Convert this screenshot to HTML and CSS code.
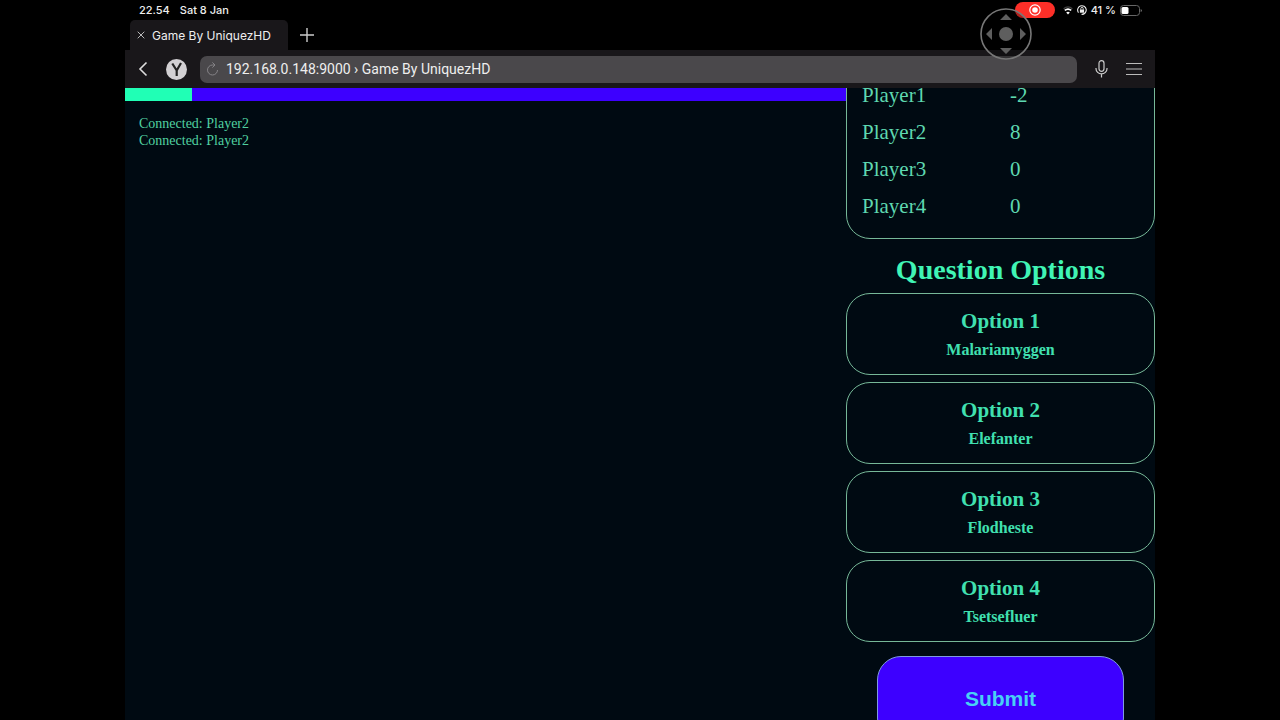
FILE: index.html
```html
<!DOCTYPE html>
<html lang="en">
<head>
<meta charset="utf-8">
<title>Game By UniquezHD</title>
<link rel="stylesheet" href="styles.css">
</head>

<body>
<div id="screen">
	<div id="status">
		<span>22.54</span>
		<span>Sat 8 Jan</span>
		<div class="status-right">
			<span class="rec">
				<svg width="12" height="12" viewBox="0 0 12 12"><circle cx="6" cy="6" r="5.2" fill="none" stroke="#fff" stroke-width="1.2"/><circle cx="6" cy="6" r="2.8" fill="#fff"/></svg>
			</span>
			<svg width="10" height="10" viewBox="0 0 10 10"><path d="M.6 3.8Q5 0 9.4 3.8" fill="none" stroke="#444" stroke-width="1.3"/><path d="M1.8 5.4Q5 2.8 8.2 5.4" fill="none" stroke="#fff" stroke-width="1.7"/><path d="M5 9.6L3.2 7.5Q5 6.1 6.8 7.5z" fill="#fff"/></svg>
			<svg width="10" height="10" viewBox="0 0 10 10"><path d="M1.5 7.6A4.3 4.3 0 1 1 4.5 9.3" fill="none" stroke="#eee" stroke-width="1.1"/><rect x="2.9" y="4.5" width="4.2" height="3.2" fill="#eee"/><path d="M3.8 4.6V3.6a1.2 1.2 0 0 1 2.4 0v1" fill="none" stroke="#eee" stroke-width=".9"/></svg>
			<span>41 %</span>
			<svg width="22" height="11" viewBox="0 0 22 11"><rect x=".5" y=".5" width="19" height="10" rx="3" fill="none" stroke="#666"/><rect x="1.5" y="2" width="7" height="7" rx="1.5" fill="#fff"/><path d="M20.7 4v3q1.2-.5 1.2-1.5T20.7 4z" fill="#777"/></svg>
		</div>
	</div>

	<div id="tabs">
		<div class="tab">
			<button class="icon" aria-label="Close tab"><svg width="8" height="8" viewBox="0 0 8 8"><path d="M.7.7l6.6 6.6M7.3.7L.7 7.3" stroke="#bbb"/></svg></button>
			<span>Game By UniquezHD</span>
		</div>
		<button class="icon" aria-label="New tab"><svg width="14" height="14" viewBox="0 0 14 14"><path d="M7 0v14M0 7h14" stroke="#ccc" stroke-width="1.4"/></svg></button>
	</div>

	<div id="toolbar">
		<button class="icon" aria-label="Back"><svg width="10" height="16" viewBox="0 0 10 16"><path d="M8.5 1.5L2 8l6.5 6.5" fill="none" stroke="#ddd" stroke-width="1.6"/></svg></button>
		<button class="icon" aria-label="Yandex"><svg width="21" height="21" viewBox="0 0 21 21"><circle cx="10.5" cy="10.5" r="10.5" fill="#d2d0d3"/><path d="M6.3 4.5l4.4 7M15 4l-4.3 7.5V17" fill="none" stroke="#222" stroke-width="2.2"/></svg></button>
		<div class="address">
			<button class="icon" aria-label="Reload"><svg width="13" height="14" viewBox="0 0 13 14"><path d="M8.5 3H6.3a5 5 0 1 0 5.2 5M6.4.4L9 3 6.4 5.6" fill="none" stroke="#858387" stroke-width="1"/></svg></button>
			<input type="text" aria-label="Address" value="192.168.0.148:9000 › Game By UniquezHD">
		</div>
		<button class="icon" aria-label="Voice search"><svg width="13" height="18" viewBox="0 0 13 18"><rect x="4" y=".7" width="5" height="10.6" rx="2.5" fill="none" stroke="#ccc" stroke-width="1.2"/><path d="M1 8v.8a5.5 5 0 0 0 11 0V8M6.5 14v3.5" fill="none" stroke="#ccc" stroke-width="1.2"/></svg></button>
		<button class="icon" aria-label="Menu"><svg width="16" height="12" viewBox="0 0 16 12"><path d="M0 .5h16M0 6h16M0 11.5h16" stroke="#bbb"/></svg></button>
	</div>

	<div id="game">
		<div id="left">
			<div class="timer"><div class="timer-bar" style="width:9.3%"></div></div>
			<div class="log">
				<div>Connected: Player2</div>
				<div>Connected: Player2</div>
			</div>
		</div>
		<div id="right">
			<div class="scores">
				<table>
					<tr><td>Player1</td><td>-2</td></tr>
					<tr><td>Player2</td><td>8</td></tr>
					<tr><td>Player3</td><td>0</td></tr>
					<tr><td>Player4</td><td>0</td></tr>
				</table>
			</div>
			<h2>Question Options</h2>
			<div class="options">
				<button class="option"><b>Option 1</b><span>Malariamyggen</span></button>
				<button class="option"><b>Option 2</b><span>Elefanter</span></button>
				<button class="option"><b>Option 3</b><span>Flodheste</span></button>
				<button class="option"><b>Option 4</b><span>Tsetsefluer</span></button>
			</div>
			<button class="submit">Submit</button>
		</div>
	</div>

	<!-- floating pointer control -->
	<svg class="dpad" width="52" height="52" viewBox="0 0 52 52"><circle cx="26" cy="26" r="25" fill="#000" fill-opacity=".3" stroke="#777" stroke-width="1.6"/><g fill="#5e5e5e"><circle cx="26" cy="26" r="7"/><path d="M20 12l6-6 6 6zM20 40l6 6 6-6zM12 20l-6 6 6 6zM40 20l6 6-6 6z"/></g></svg>
</div>
</body>
</html>
```
FILE: styles.css
```css
*{box-sizing:border-box}
body{margin:0; background:#000; color:#40e0b0; font-family:"Liberation Serif", serif}
button{padding:0; border:0; background:none; color:inherit; font-family:inherit}

div#screen{
position:relative;
display:flex; flex-direction:column;
height:100vh; margin:0 125px;
overflow:hidden;
}

/* browser */
div#status, div#tabs, div#toolbar{font-family:Inter, "Liberation Sans", sans-serif; color:#eee; display:flex; align-items:center; flex:none}
div#status{height:20px; padding:0 13px 0 14px; gap:10px; font-size:11px; font-weight:500}
.status-right{display:flex; align-items:center; gap:4px; margin-left:auto}
.rec{display:flex; align-items:center; justify-content:center; width:40px; height:16px; margin-right:4px; border-radius:8px; background:#fd2f28}
.icon{display:flex; flex:none; align-items:center; justify-content:center}

div#tabs{height:30px; padding-left:5px; gap:12px}
.tab{display:flex; align-items:center; gap:7px; width:158px; height:31px; padding-left:7px; border-radius:5px 5px 0 0; background:#19171a; font-size:12px}

div#toolbar{height:38px; padding:0 13px; gap:18px; background:#19171a}
.address{display:flex; align-items:center; flex:1; height:27px; margin-left:-5px; padding:0 6px; gap:7px; border-radius:7px; background:#4a484b}
.address input{flex:1; min-width:0; padding:0; border:0; background:none; color:#eee; font:14px Roboto, "Liberation Sans", sans-serif}

/* game */
div#game{display:flex; flex:1; min-height:0; overflow:hidden; background:#000a12}
div#left{width:70%}
div#right{width:30%}
.timer{height:13px; background:#3d00ff}
.timer-bar{height:100%; background:#20ffb5}
.log{padding:14px; font-size:14px; line-height:17px; color:#50d0a0}

/* the page is scrolled, top of the score box is out of view */
.scores{margin-top:-24px; padding:12px 15px 13px; border:1px solid #76b898; border-radius:24px; color:#5ed8b0}
.scores table{width:100%; border-collapse:collapse; table-layout:fixed; font-size:21px; line-height:37px}
.scores td{padding:0}
.scores td:first-child{width:148px}

h2{margin:15px 0 8px; font-size:28px; line-height:31px; text-align:center; color:#40f5b5}
.options{display:flex; flex-direction:column; gap:7px}
.option{display:flex; flex-direction:column; align-items:center; justify-content:center; gap:5px; height:82px; padding-top:2px; border:1px solid #76b898; border-radius:24px; font-size:16px; font-weight:bold; line-height:24px}
.option b{font-size:21px}
.submit{display:block; width:80%; height:86px; margin:14px auto 0; border:1px solid #7f9ae0; border-radius:24px; background:#3d00ff; color:#48d0f5; font:bold 21px "Liberation Sans", sans-serif}

.dpad{position:absolute; top:8px; right:123px}
```
